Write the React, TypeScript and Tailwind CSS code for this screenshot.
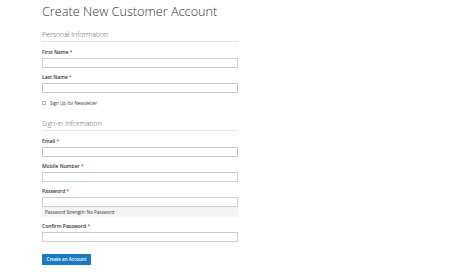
import { useState } from 'react';

function Label({ text }: { text: string }) {
  return (
    <div className="h-[6px] leading-[6px] text-[5px] font-semibold text-[#333]">
      {text} <span className="text-[#e02b27]">*</span>
    </div>
  );
}

function Field({ label, type = 'text', top = 'mt-[6px]' }: { label: string; type?: string; top?: string }) {
  return (
    <div className={top}>
      <Label text={label} />
      <input
        type={type}
        className="mt-[3px] block h-[10px] w-full border border-[#cdcdcd] bg-white outline-none"
      />
    </div>
  );
}

export default function App() {
  const [newsletter, setNewsletter] = useState(false);

  return (
    <div className="min-h-screen w-[474px] bg-white font-['Open_Sans',sans-serif] text-[#333]">
      <div className="w-[238px] pl-[42px]">
        {/* Title */}
        <h1 className="h-[22px] text-[12.7px] font-light leading-[22px]">Create New Customer Account</h1>

        {/* Personal Information */}
        <div className="mt-[8px] h-[9px] text-[7px] font-light leading-[9px] text-[#575757]">Personal Information</div>
        <div className="mt-[2px] h-[1px] bg-[#e4e4e4]" />

        <Field label="First Name" top="mt-[7px]" />
        <Field label="Last Name" />

        <label className="mt-[7px] flex h-[6px] items-center gap-[4px]">
          <input
            type="checkbox"
            checked={newsletter}
            onChange={() => setNewsletter(!newsletter)}
            className="h-[4px] w-[4px] appearance-none border border-[#b6b6b6] bg-white"
          />
          <span className="text-[4.5px] leading-[6px]">Sign Up for Newsletter</span>
        </label>

        {/* Sign-in Information */}
        <div className="mt-[13px] h-[9px] text-[7px] font-light leading-[9px] text-[#575757]">Sign-in Information</div>
        <div className="mt-[2px] h-[1px] bg-[#e4e4e4]" />

        <Field label="Email" type="email" top="mt-[7px]" />
        <Field label="Mobile Number" />
        <Field label="Password" type="password" />
        <div className="h-[10px] bg-[#f4f4f4] pl-[3px] text-[4.5px] leading-[10px]">Password Strength: No Password</div>
        <Field label="Confirm Password" type="password" />

        <button className="mt-[12px] h-[11px] w-[49px] bg-[#1979c3] text-[4.5px] font-semibold leading-[11px] text-white">
          Create an Account
        </button>
      </div>
    </div>
  );
}
